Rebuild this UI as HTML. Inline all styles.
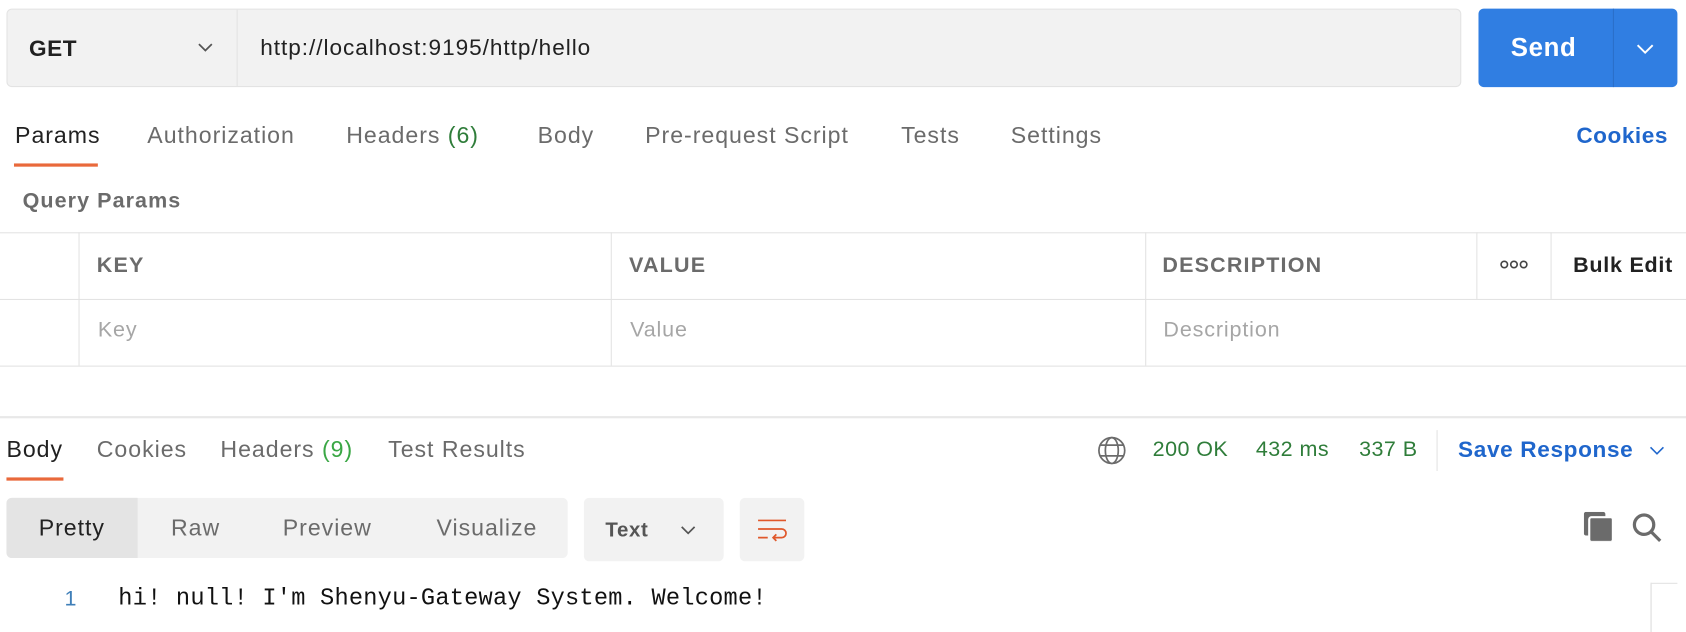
<!DOCTYPE html>
<html><head><meta charset="utf-8"><style>
body{margin:0;width:1686px;height:632px;overflow:hidden;background:#fff;font-family:"Liberation Sans",sans-serif;}
#w{position:absolute;left:0;top:0;width:1568px;height:588px;transform:scale(1.07526);transform-origin:0 0;}
.a{position:absolute;white-space:nowrap;line-height:1;}
.t{font-size:21.5px;color:#6b6b6b;letter-spacing:0.9px}
.g{color:#2f7d3a}
.b{font-weight:bold}
.hl{position:absolute;height:1px;background:#e3e3e3;}
.vl{position:absolute;width:1px;background:#e3e3e3;}
</style></head><body><div id="w">
<div class="a" style="left:6px;top:8px;width:1351px;height:71px;background:#f2f2f2;border:1px solid #e3e3e3;border-radius:5px"></div>
<div class="vl" style="left:220px;top:9px;height:71px"></div>
<div class="a b" style="left:27px;top:35px;font-size:21px;color:#212121;letter-spacing:0.5px">GET</div>
<svg class="a" style="left:183px;top:38px" width="16" height="12"><path d="M2 3l6 6 6-6" fill="none" stroke="#555" stroke-width="1.6"/></svg>
<div class="a" style="left:242px;top:34px;font-size:21px;color:#212121;letter-spacing:0.9px">http://localhost:9195/http/hello</div>
<div class="a" style="left:1375px;top:8px;width:185px;height:73px;background:#307ee2;border-radius:5px"></div>
<div class="a" style="left:1500px;top:8px;width:1px;height:73px;background:#2a6fc9"></div>
<div class="a b" style="left:1405px;top:33px;font-size:24px;color:#fff;letter-spacing:0.6px">Send</div>
<svg class="a" style="left:1521px;top:40px" width="18" height="12"><path d="M2 2l7 7 7-7" fill="none" stroke="#fff" stroke-width="1.8"/></svg>

<div class="a t" style="left:14px;top:116px;color:#212121">Params</div>
<div class="a" style="left:13px;top:152px;width:78px;height:3px;background:#e9693b"></div>
<div class="a t" style="left:137px;top:116px">Authorization</div>
<div class="a t" style="left:322px;top:116px">Headers <span class="g">(6)</span></div>
<div class="a t" style="left:500px;top:116px">Body</div>
<div class="a t" style="left:600px;top:116px">Pre-request Script</div>
<div class="a t" style="left:838px;top:116px">Tests</div>
<div class="a t" style="left:940px;top:116px">Settings</div>
<div class="a b" style="left:1466px;top:116px;font-size:21px;color:#1f66cc;letter-spacing:0.5px">Cookies</div>
<div class="a b" style="left:21px;top:177px;font-size:20px;color:#6b6b6b;letter-spacing:1px">Query Params</div>

<div class="hl" style="left:0;top:216px;width:1568px"></div>
<div class="hl" style="left:0;top:278px;width:1568px"></div>
<div class="hl" style="left:0;top:340px;width:1568px"></div>
<div class="vl" style="left:73px;top:216px;height:124px"></div>
<div class="vl" style="left:568px;top:216px;height:124px"></div>
<div class="vl" style="left:1065px;top:216px;height:124px"></div>
<div class="vl" style="left:1373px;top:216px;height:62px"></div>
<div class="vl" style="left:1442px;top:216px;height:62px"></div>
<div class="a b" style="left:90px;top:237px;font-size:20px;color:#6b6b6b;letter-spacing:1.1px">KEY</div>
<div class="a b" style="left:585px;top:237px;font-size:20px;color:#6b6b6b;letter-spacing:1.1px">VALUE</div>
<div class="a b" style="left:1081px;top:237px;font-size:20px;color:#6b6b6b;letter-spacing:1.1px">DESCRIPTION</div>
<svg class="a" style="left:1395px;top:241px" width="28" height="10" fill="none" stroke="#444" stroke-width="1.5"><circle cx="4" cy="5" r="3"/><circle cx="13" cy="5" r="3"/><circle cx="22" cy="5" r="3"/></svg>
<div class="a b" style="left:1463px;top:237px;font-size:20px;color:#212121;letter-spacing:0.7px">Bulk Edit</div>
<div class="a" style="left:91px;top:297px;font-size:20px;color:#a6a6a6;letter-spacing:0.8px">Key</div>
<div class="a" style="left:586px;top:297px;font-size:20px;color:#a6a6a6;letter-spacing:0.8px">Value</div>
<div class="a" style="left:1082px;top:297px;font-size:20px;color:#a6a6a6;letter-spacing:0.8px">Description</div>

<div class="a" style="left:0;top:387px;width:1568px;height:2px;background:#e8e8e8"></div>
<div class="a t" style="left:6px;top:408px;color:#212121">Body</div>
<div class="a" style="left:6px;top:444px;width:53px;height:3px;background:#e9693b"></div>
<div class="a t" style="left:90px;top:408px">Cookies</div>
<div class="a t" style="left:205px;top:408px">Headers <span style="color:#3aa745">(9)</span></div>
<div class="a t" style="left:361px;top:408px">Test Results</div>
<svg class="a" style="left:1020px;top:405px" width="28" height="28" fill="none" stroke="#6b6b6b" stroke-width="1.6"><circle cx="14" cy="14" r="12"/><ellipse cx="14" cy="14" rx="6" ry="12"/><path d="M3 9h22M3 19h22"/></svg>
<div class="a g" style="left:1072px;top:408px;font-size:20px;letter-spacing:0.4px">200 OK</div>
<div class="a g" style="left:1168px;top:408px;font-size:20px;letter-spacing:0.4px">432 ms</div>
<div class="a g" style="left:1264px;top:408px;font-size:20px;letter-spacing:0.4px">337 B</div>
<div class="vl" style="left:1336px;top:400px;height:38px;background:#e3e3e3"></div>
<div class="a b" style="left:1356px;top:408px;font-size:21px;color:#1f66cc;letter-spacing:0.6px">Save Response</div>
<svg class="a" style="left:1533px;top:413px" width="16" height="12"><path d="M2 3l6 6 6-6" fill="none" stroke="#1f66cc" stroke-width="1.5"/></svg>

<div class="a" style="left:6px;top:463px;width:522px;height:56px;background:#f2f2f2;border-radius:5px"></div>
<div class="a" style="left:6px;top:463px;width:122px;height:56px;background:#e4e4e4;border-radius:5px 0 0 5px"></div>
<div class="a t" style="left:36px;top:481px;color:#212121">Pretty</div>
<div class="a t" style="left:159px;top:481px">Raw</div>
<div class="a t" style="left:263px;top:481px">Preview</div>
<div class="a t" style="left:406px;top:481px">Visualize</div>
<div class="a" style="left:543px;top:463px;width:130px;height:59px;background:#f2f2f2;border-radius:5px"></div>
<div class="a b" style="left:563px;top:484px;font-size:19px;color:#555;letter-spacing:0.6px">Text</div>
<svg class="a" style="left:632px;top:487px" width="16" height="12"><path d="M2 3l6 6 6-6" fill="none" stroke="#555" stroke-width="1.6"/></svg>
<div class="a" style="left:688px;top:463px;width:60px;height:59px;background:#f2f2f2;border-radius:5px"></div>
<svg class="a" style="left:704px;top:481px" width="28" height="24" fill="none" stroke="#e0582b" stroke-width="1.6"><path d="M1 3h26M1 11h22a4 4 0 0 1 0 8h-8M18 16l-3 3 3 3M1 19h9"/></svg>
<svg class="a" style="left:1473px;top:476px" width="28" height="28"><rect x="0" y="0" width="20" height="22" rx="2" fill="#6b6b6b"/><rect x="5" y="5" width="22" height="23" rx="2" fill="#6b6b6b" stroke="#fff" stroke-width="2"/></svg>
<svg class="a" style="left:1517px;top:476px" width="30" height="30" fill="none" stroke="#6b6b6b" stroke-width="3"><circle cx="12" cy="12" r="9"/><path d="M19 19l8 8"/></svg>
<div class="a" style="left:60px;top:547px;font-size:20px;color:#3f7fb8">1</div>
<div class="a" style="left:110px;top:546px;font-size:22px;color:#111;font-family:'Liberation Mono',monospace;letter-spacing:0.2px">hi! null! I'm Shenyu-Gateway System. Welcome!</div>
<div class="vl" style="left:1535px;top:542px;height:46px;background:#ddd"></div>
<div class="hl" style="left:1535px;top:542px;width:25px"></div>
</div></body></html>
